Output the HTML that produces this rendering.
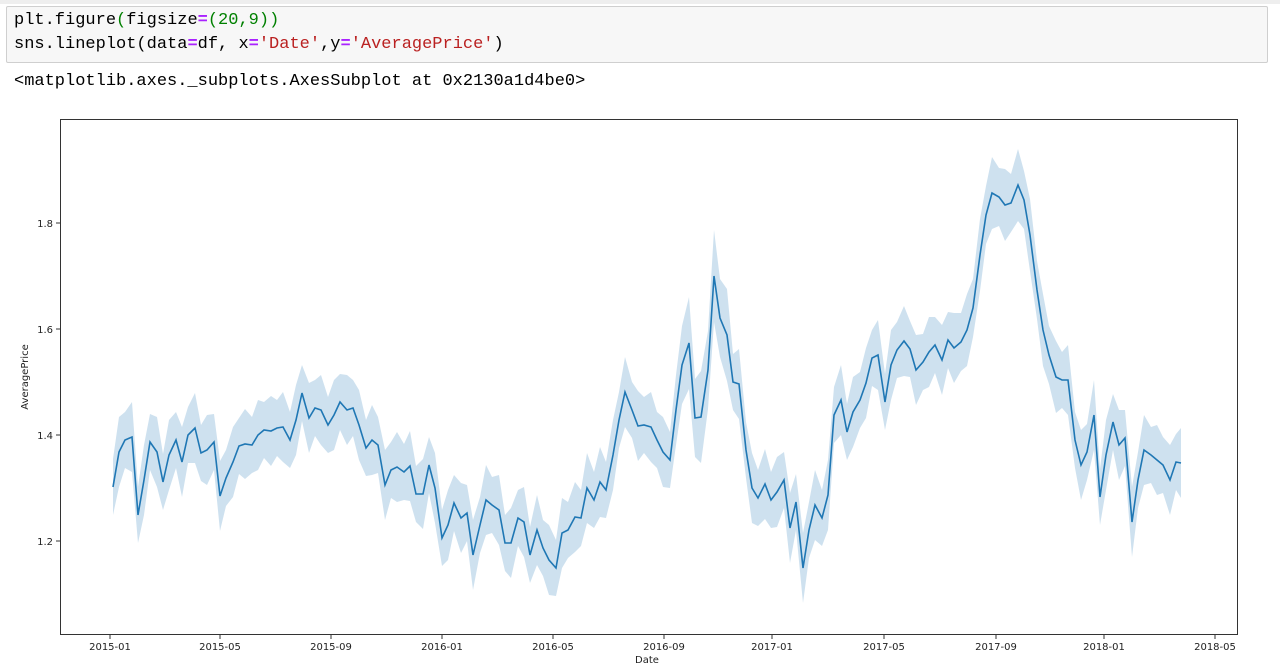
<!DOCTYPE html>
<html><head><meta charset="utf-8"><style>
body{margin:0;width:1280px;height:663px;overflow:hidden;background:#fff;font-family:"Liberation Mono","Courier New",monospace;}
.top{position:absolute;left:0;top:0;width:1280px;height:4px;background:#eee}
.cell{position:absolute;left:6px;top:6px;width:1260px;height:55px;background:#f7f7f7;border:1px solid #cfcfcf;border-radius:2px;}
.code{position:absolute;left:14px;top:9px;font-size:17px;line-height:24px;color:#000;white-space:pre}
.out{position:absolute;left:14px;top:72px;font-size:17px;color:#000;white-space:pre}
.g{color:#008000}.p{color:#aa22ff;font-weight:bold}.r{color:#ba2121}
svg{position:absolute;left:0;top:0}
svg text{font-family:"DejaVu Sans","Liberation Sans",sans-serif;font-size:10px;fill:#222}
</style></head><body>
<div class="top"></div>
<div class="cell"></div>
<div class="code">plt.figure<span class="g">(</span>figsize<span class="p">=</span><span class="g">(20,9))</span>
sns.lineplot(data<span class="p">=</span>df, x<span class="p">=</span><span class="r">'Date'</span>,y<span class="p">=</span><span class="r">'AveragePrice'</span>)</div>
<div class="out">&lt;matplotlib.axes._subplots.AxesSubplot at 0x2130a1d4be0&gt;</div>
<svg id="s" width="1280" height="663" xmlns="http://www.w3.org/2000/svg">
<rect x="60.5" y="119.5" width="1177" height="515" fill="none" stroke="#333" stroke-width="1"/>
<path id="band" fill="#1f77b4" fill-opacity="0.22" d=""/>
<path id="line" fill="none" stroke="#1f77b4" stroke-width="1.6" d=""/>
<g stroke="#333"><line x1="56" x2="60" y1="541" y2="541"/><line x1="56" x2="60" y1="435" y2="435"/><line x1="56" x2="60" y1="329" y2="329"/><line x1="56" x2="60" y1="223" y2="223"/></g>
<text x="53" y="545" text-anchor="end">1.2</text><text x="53" y="439" text-anchor="end">1.4</text><text x="53" y="333" text-anchor="end">1.6</text><text x="53" y="227" text-anchor="end">1.8</text>
<text x="28" y="377" text-anchor="middle" transform="rotate(-90 28 377)">AveragePrice</text>
<g id="xt" stroke="#333"></g>
<g id="xl"></g>
<text x="647" y="663" text-anchor="middle">Date</text>
</svg>
<script>
var pts=[113,487,119,452,125,440,132,437,138,515,144,480,150,442,157,452,163,482,169,455,176,440,182,462,188,435,195,428,201,453,207,450,214,442,220,496,226,478,233,462,239,446,245,444,252,445,258,435,264,430,271,431,277,428,283,427,290,440,296,420,302,393,309,418,315,408,321,410,328,425,334,415,340,402,347,410,353,408,359,425,366,448,372,440,378,445,385,485,391,470,397,467,404,472,410,466,416,494,423,494,429,465,435,488,442,538,448,525,454,503,461,518,467,513,473,555,480,525,486,500,492,505,499,510,505,543,511,543,518,518,524,522,530,555,537,530,543,548,549,560,556,568,562,533,568,530,575,517,581,518,587,488,594,500,600,482,606,490,613,455,619,420,625,392,632,410,638,426,644,425,651,427,657,440,663,452,670,460,676,410,682,365,689,343,695,418,701,417,708,370,714,276,720,318,727,335,733,382,739,384,746,450,752,488,758,498,765,484,771,500,777,492,784,480,790,528,796,502,803,568,809,530,815,505,822,518,828,495,834,415,841,400,847,432,853,412,860,400,866,383,872,358,878,355,885,402,891,365,897,350,904,341,910,349,916,370,923,362,929,352,935,345,942,360,948,340,954,348,961,342,967,330,973,308,980,255,986,215,992,193,999,197,1005,205,1011,203,1018,185,1024,200,1030,235,1037,290,1043,330,1049,355,1056,377,1062,380,1068,380,1075,440,1081,465,1087,452,1094,415,1100,497,1106,455,1113,422,1119,445,1125,438,1132,522,1138,480,1144,450,1151,455,1157,460,1163,465,1170,480,1176,462,1181,463];
var l="",up=[],dn=[];
for(var i=0;i<pts.length;i+=2){var x=pts[i],y=pts[i+1];l+=(i?"L":"M")+x+","+y;
var w=(x>960&&x<1060)?32:(x>680&&x<730?42:31);w+= (i%4?4:-3);
up.push(x+","+(y-w));dn.unshift(x+","+(y+w));}
document.getElementById("line").setAttribute("d",l);
document.getElementById("band").setAttribute("d","M"+up.join("L")+"L"+dn.join("L")+"Z");
var tx=[110,220,331,442,553,664,772,884,996,1104,1215],tl=["2015-01","2015-05","2015-09","2016-01","2016-05","2016-09","2017-01","2017-05","2017-09","2018-01","2018-05"];
var t="",lb="";for(var j=0;j<tx.length;j++){t+='<line x1="'+tx[j]+'" x2="'+tx[j]+'" y1="635" y2="639"/>';lb+='<text x="'+tx[j]+'" y="650" text-anchor="middle">'+tl[j]+'</text>';}
document.getElementById("xt").innerHTML=t;document.getElementById("xl").innerHTML=lb;
</script>
</body></html>
